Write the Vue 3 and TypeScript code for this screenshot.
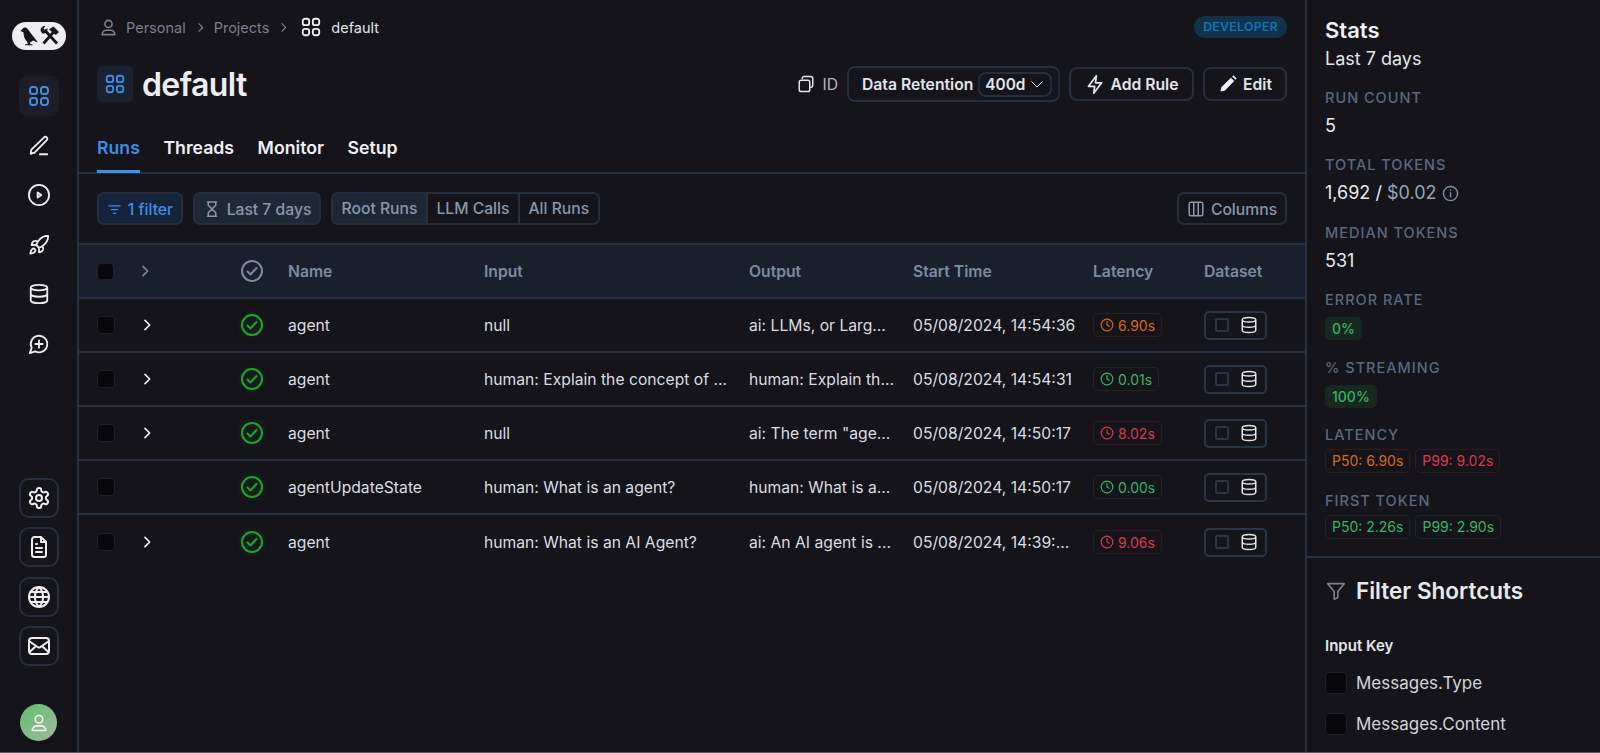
<script setup lang="ts">
type Tone = 'orange' | 'green' | 'red'

interface Run {
  name: string
  input: string
  output: string
  start: string
  latency: string
  tone: Tone
  expandable: boolean
}

const icons: Record<string, string> = {
  grid: 'M3 5.5A2.5 2.5 0 0 1 5.5 3h2A2.5 2.5 0 0 1 10 5.5v2A2.5 2.5 0 0 1 7.5 10h-2A2.5 2.5 0 0 1 3 7.5zM14 5.5A2.5 2.5 0 0 1 16.5 3h2A2.5 2.5 0 0 1 21 5.5v2a2.5 2.5 0 0 1-2.5 2.5h-2A2.5 2.5 0 0 1 14 7.5zM3 16.5A2.5 2.5 0 0 1 5.5 14h2a2.5 2.5 0 0 1 2.5 2.5v2A2.5 2.5 0 0 1 7.5 21h-2A2.5 2.5 0 0 1 3 18.5zM14 16.5a2.5 2.5 0 0 1 2.5-2.5h2a2.5 2.5 0 0 1 2.5 2.5v2a2.5 2.5 0 0 1-2.5 2.5h-2a2.5 2.5 0 0 1-2.5-2.5z',
  pen: 'M21 21h-8M3 20.5l.4-3.3c.05-.4.07-.6.13-.79a2 2 0 0 1 .23-.5c.1-.16.25-.3.54-.6L17.5 2.5a2.12 2.12 0 0 1 3 3L7.7 18.7c-.3.3-.44.44-.6.54a2 2 0 0 1-.5.23c-.19.06-.39.08-.79.13z',
  play: 'M23 12a11 11 0 1 1-22 0 11 11 0 0 1 22 0zM10.5 9.2v5.600l4-2.800z',
  rocket: 'M4.5 16.5c-1.5 1.26-2 5-2 5s3.74-.5 5-2c.71-.84.7-2.13-.09-2.91a2.18 2.18 0 0 0-2.91-.09zM12 15l-3-3a22 22 0 0 1 2-3.95A12.88 12.88 0 0 1 22 2c0 2.72-.78 7.5-6 11a22.35 22.35 0 0 1-4 2zM9 12H4s.55-3.03 2-4c1.62-1.08 5 0 5 0M12 15v5s3.03-.55 4-2c1.08-1.62 0-5 0-5',
  database: 'M21 5c0 1.66-4 3-9 3S3 6.66 3 5s4-3 9-3 9 1.34 9 3zM21 12c0 1.66-4 3-9 3s-9-1.34-9-3M3 5v14c0 1.66 4 3 9 3s9-1.34 9-3V5',
  chat: 'M7.9 20A9 9 0 1 0 4 16.1L2 22zM8 12h8M12 8v8',
  settings: 'M12.22 2h-.44a2 2 0 0 0-2 2v.18a2 2 0 0 1-1 1.73l-.43.25a2 2 0 0 1-2 0l-.15-.08a2 2 0 0 0-2.73.73l-.22.38a2 2 0 0 0 .73 2.73l.15.1a2 2 0 0 1 1 1.72v.51a2 2 0 0 1-1 1.74l-.15.09a2 2 0 0 0-.73 2.73l.22.38a2 2 0 0 0 2.73.73l.15-.08a2 2 0 0 1 2 0l.43.25a2 2 0 0 1 1 1.73V20a2 2 0 0 0 2 2h.44a2 2 0 0 0 2-2v-.18a2 2 0 0 1 1-1.73l.43-.25a2 2 0 0 1 2 0l.15.08a2 2 0 0 0 2.73-.73l.22-.39a2 2 0 0 0-.73-2.73l-.15-.08a2 2 0 0 1-1-1.74v-.5a2 2 0 0 1 1-1.74l.15-.09a2 2 0 0 0 .73-2.73l-.22-.38a2 2 0 0 0-2.73-.73l-.15.08a2 2 0 0 1-2 0l-.43-.25a2 2 0 0 1-1-1.73V4a2 2 0 0 0-2-2zM15 12a3 3 0 1 1-6 0 3 3 0 0 1 6 0z',
  file: 'M14 2H7.5A2.5 2.5 0 0 0 5 4.5v15A2.5 2.5 0 0 0 7.5 22h9a2.5 2.5 0 0 0 2.5-2.5V7zM14 2v5h5M9 13h6M9 17h6M9 9h1',
  globe: 'M22 12a10 10 0 1 1-20 0 10 10 0 0 1 20 0zM2 12h20M12 2c-5.4 5.6-5.4 14.4 0 20M12 2c5.4 5.6 5.4 14.4 0 20M3.5 7h17M3.5 17h17',
  mail: 'M5 4h14a3 3 0 0 1 3 3v10a3 3 0 0 1-3 3H5a3 3 0 0 1-3-3V7a3 3 0 0 1 3-3zM21.5 18 14.9 12M9.1 12 2.5 18M2 7l8.2 5.7c.66.46 1 .7 1.35.78a2 2 0 0 0 .97 0c.36-.09.69-.32 1.35-.78L22 7',
  user: 'M12 12a4.5 4.5 0 1 0 0-9 4.5 4.5 0 0 0 0 9zM4 21c0-3.4 2.6-5.5 5.5-5.5h5c2.9 0 5.5 2.100 5.500 5.500z',
  chevron: 'M9 5l7 7-7 7',
  check: 'M22 12a10 10 0 1 1-20 0 10 10 0 0 1 20 0zM7.500 12.500l3 3 6-6.500',
  clock: 'M22 12a10 10 0 1 1-20 0 10 10 0 0 1 20 0zM12 6v6l4 2',
}

const navItems = ['pen', 'play', 'rocket', 'database', 'chat']
const footItems = ['settings', 'file', 'globe', 'mail']
const tabs = ['Runs', 'Threads', 'Monitor', 'Setup']
const segments = ['Root Runs', 'LLM Calls', 'All Runs']
const columns = ['Name', 'Input', 'Output', 'Start Time', 'Latency', 'Dataset']

const runs: Run[] = [
  { name: 'agent', input: 'null', output: 'ai: LLMs, or Larg...', start: '05/08/2024, 14:54:36', latency: '6.90s', tone: 'orange', expandable: true },
  { name: 'agent', input: 'human: Explain the concept of ...', output: 'human: Explain th...', start: '05/08/2024, 14:54:31', latency: '0.01s', tone: 'green', expandable: true },
  { name: 'agent', input: 'null', output: 'ai: The term "age...', start: '05/08/2024, 14:50:17', latency: '8.02s', tone: 'red', expandable: true },
  { name: 'agentUpdateState', input: 'human: What is an agent?', output: 'human: What is a...', start: '05/08/2024, 14:50:17', latency: '0.00s', tone: 'green', expandable: false },
  { name: 'agent', input: 'human: What is an AI Agent?', output: 'ai: An AI agent is ...', start: '05/08/2024, 14:39:...', latency: '9.06s', tone: 'red', expandable: true },
]
</script>

<template>
  <div class="app">
    <aside class="sidebar">
      <svg class="logo" viewBox="0 0 54 28" width="54" height="28">
        <rect width="54" height="28" rx="14" fill="#eeeef1" />
        <path d="M8.500 9 11 6.200q2.500-1.400 4.500.6l3.500 4.700 7 9-5-2q-1.500 1.500-3 1.500l.5 2.300h2v1H13v-1h2.800l-.5-2.300q-3.800-4-3.800-9.500-1-1-3-1.500z" fill="#15151a" />
        <path d="M31.500 21.500 42 9.500M32.500 8 45 21.500" stroke="#15151a" stroke-width="2.800" fill="none" />
        <path d="M37 7.500 41.500 4.500l5.500 5.500-3.200 3zM28.500 9a4.500 4.500 0 0 1 5-5l-2 2.500 1.500 1.500 2.500-1.800A4.500 4.500 0 0 1 30.500 11.500z" fill="#15151a" />
      </svg>

      <a class="nav-active">
        <svg class="icon" viewBox="0 0 24 24" width="24" height="24"><path :d="icons.grid" /></svg>
      </a>
      <nav class="nav">
        <a v-for="item in navItems" :key="item" class="nav-item">
          <svg class="icon" viewBox="0 0 24 24" width="22" height="22"><path :d="icons[item]" /></svg>
        </a>
      </nav>

      <div class="foot">
        <a v-for="item in footItems" :key="item" class="foot-item">
          <svg class="icon" viewBox="0 0 24 24" width="24" height="24"><path :d="icons[item]" /></svg>
        </a>
        <div class="avatar">
          <svg class="icon" viewBox="0 0 24 24" width="20" height="20"><path :d="icons.user" /></svg>
        </div>
      </div>
    </aside>

    <main class="main">
      <div class="breadcrumb">
        <svg class="icon crumb-user" viewBox="0 0 24 24" width="19" height="19"><path :d="icons.user" /></svg>
        <span class="crumb">Personal</span>
        <svg class="icon crumb-sep" viewBox="0 0 24 24" width="13" height="13"><path :d="icons.chevron" /></svg>
        <span class="crumb">Projects</span>
        <svg class="icon crumb-sep" viewBox="0 0 24 24" width="13" height="13"><path :d="icons.chevron" /></svg>
        <svg class="icon crumb-grid" viewBox="0 0 24 24" width="22" height="22"><path :d="icons.grid" /></svg>
        <span class="crumb-current">default</span>
        <span class="badge">DEVELOPER</span>
      </div>

      <div class="title-row">
        <div class="title-icon">
          <svg class="icon" viewBox="0 0 24 24" width="22" height="22"><path :d="icons.grid" /></svg>
        </div>
        <h1 class="title">default</h1>
        <div class="actions">
          <svg class="icon copy-icon" viewBox="0 0 24 24" width="18" height="18">
            <path d="M7 4.500A2.500 2.500 0 0 1 9.500 2H18a3 3 0 0 1 3 3v9a2.500 2.500 0 0 1-2 2.400M5.500 7h9A2.500 2.500 0 0 1 17 9.500v10a2.500 2.500 0 0 1-2.500 2.500h-9A2.500 2.500 0 0 1 3 19.500v-10A2.500 2.500 0 0 1 5.500 7z" />
          </svg>
          <span class="id-label">ID</span>
          <div class="retention">
            <span>Data Retention</span>
            <span class="retention-select">
              400d
              <svg class="icon thin" viewBox="0 0 24 24" width="16" height="16"><path d="M4 8.500l8 8 8-8" /></svg>
            </span>
          </div>
          <button class="action-btn add-rule">
            <svg class="icon" viewBox="0 0 24 24" width="21" height="21"><path d="M13 2 4 14h7l-1 8 9-12h-7z" /></svg>
            Add Rule
          </button>
          <button class="action-btn edit">
            <svg viewBox="0 0 24 24" width="20" height="20"><path d="M3 21l1-5L15.500 4.500l4 4L8 20zM17 3l1.500-1.500 4 4L21 7z" fill="#f0f0f3" /></svg>
            Edit
          </button>
        </div>
      </div>

      <div class="tabs">
        <a v-for="(tab, i) in tabs" :key="tab" class="tab" :class="{ 'tab-active': i === 0 }">{{ tab }}</a>
      </div>

      <div class="toolbar">
        <button class="tool-btn filter-btn">
          <svg class="icon" viewBox="0 0 24 24" width="15" height="15"><path d="M3 6h18M7 12h10M10 18h4" /></svg>
          1 filter
        </button>
        <button class="tool-btn days-btn">
          <svg class="icon" viewBox="0 0 24 24" width="18" height="18"><path d="M6 2.500h12M6 21.500h12M7 2.500v4.500l5 5 5-5V2.500M7 21.500V17l5-5 5 5v4.500" /></svg>
          Last 7 days
        </button>
        <div class="segments">
          <span v-for="(seg, i) in segments" :key="seg" class="segment" :class="{ 'segment-active': i === 0 }">{{ seg }}</span>
        </div>
        <button class="tool-btn columns-btn">
          <svg class="icon" viewBox="0 0 24 24" width="18" height="18"><path d="M5 3h14a2 2 0 0 1 2 2v14a2 2 0 0 1-2 2H5a2 2 0 0 1-2-2V5a2 2 0 0 1 2-2zM9 3v18M15 3v18" /></svg>
          Columns
        </button>
      </div>

      <div class="table">
        <div class="row head-row">
          <span class="checkbox head-checkbox"></span>
          <span class="chevron-cell">
            <svg class="icon" viewBox="0 0 24 24" width="16" height="16"><path :d="icons.chevron" /></svg>
          </span>
          <span class="status-cell">
            <svg class="icon" viewBox="0 0 24 24" width="24" height="24"><path :d="icons.check" /></svg>
          </span>
          <span v-for="col in columns" :key="col">{{ col }}</span>
        </div>

        <div v-for="(run, i) in runs" :key="i" class="row body-row">
          <span class="checkbox"></span>
          <span class="chevron-cell">
            <svg v-if="run.expandable" class="icon row-chevron" viewBox="0 0 24 24" width="16" height="16"><path :d="icons.chevron" /></svg>
          </span>
          <span class="status-cell status-ok">
            <svg class="icon" viewBox="0 0 24 24" width="24" height="24"><path :d="icons.check" /></svg>
          </span>
          <span class="cell">{{ run.name }}</span>
          <span class="cell">{{ run.input }}</span>
          <span class="cell">{{ run.output }}</span>
          <span class="cell">{{ run.start }}</span>
          <span class="cell">
            <span class="latency" :class="run.tone">
              <svg class="icon" viewBox="0 0 24 24" width="14" height="14"><path :d="icons.clock" /></svg>
              {{ run.latency }}
            </span>
          </span>
          <span class="cell">
            <span class="dataset">
              <span class="dataset-check"></span>
              <svg class="icon" viewBox="0 0 24 24" width="18" height="18"><path :d="icons.database" /></svg>
            </span>
          </span>
        </div>
      </div>
    </main>

    <aside class="stats">
      <div class="stats-top">
        <h2 class="stats-title">Stats</h2>
        <p class="stats-range">Last 7 days</p>

        <p class="stat-label">RUN COUNT</p>
        <p class="stat-value">5</p>

        <p class="stat-label">TOTAL TOKENS</p>
        <p class="stat-value">
          <span>1,692 / <span class="cost">$0.02</span></span>
          <svg class="icon info" viewBox="0 0 24 24" width="17" height="17"><path d="M22 12a10 10 0 1 1-20 0 10 10 0 0 1 20 0zM12 11v6M12 7v.5" /></svg>
        </p>

        <p class="stat-label">MEDIAN TOKENS</p>
        <p class="stat-value">531</p>

        <p class="stat-label">ERROR RATE</p>
        <span class="pill">0%</span>

        <p class="stat-label">% STREAMING</p>
        <span class="pill">100%</span>

        <p class="stat-label">LATENCY</p>
        <div class="chips">
          <span class="chip orange">P50: 6.90s</span>
          <span class="chip red">P99: 9.02s</span>
        </div>

        <p class="stat-label">FIRST TOKEN</p>
        <div class="chips">
          <span class="chip green">P50: 2.26s</span>
          <span class="chip green">P99: 2.90s</span>
        </div>
      </div>

      <div class="shortcuts">
        <h3 class="shortcuts-title">
          <svg class="icon" viewBox="0 0 24 24" width="22" height="22"><path d="M3 4h18l-7 8.500V19l-4 2v-8.500z" /></svg>
          Filter Shortcuts
        </h3>
        <p class="shortcut-group">Input Key</p>
        <label class="shortcut"><span class="shortcut-box"></span>Messages.Type</label>
        <label class="shortcut"><span class="shortcut-box"></span>Messages.Content</label>
      </div>
    </aside>
  </div>
</template>

<style scoped>
.app {
  display: flex;
  box-sizing: border-box;
  height: 753px;
  overflow: hidden;
  border-bottom: 1px solid #5a5b60;
  background: #14141a;
  color: #e4e5ea;
  font-family: Inter, "Liberation Sans", sans-serif;
}

p,
h1,
h2,
h3 {
  margin: 0;
}

.icon {
  display: block;
  flex-shrink: 0;
  fill: none;
  stroke: currentColor;
  stroke-width: 2;
  stroke-linecap: round;
  stroke-linejoin: round;
}

.thin {
  stroke-width: 1.5;
}

/* left rail */
.sidebar {
  display: flex;
  flex-direction: column;
  align-items: center;
  flex: 0 0 79px;
  box-sizing: border-box;
  padding-top: 22px;
  border-right: 2px solid #273142;
  color: #eeeef1;
}

.logo {
  display: block;
}

.nav-active {
  display: grid;
  place-items: center;
  width: 40px;
  height: 40px;
  margin-top: 26px;
  border-radius: 8px;
  background: #1d1e25;
  color: #3f8fe6;
}

.nav {
  display: flex;
  flex-direction: column;
  margin-top: 5px;
}

.nav-item {
  display: grid;
  place-items: center;
  width: 40px;
  height: 49.5px;
}

.foot {
  display: flex;
  flex-direction: column;
  align-items: center;
  gap: 9.5px;
  margin-top: auto;
  padding-bottom: 11px;
}

.foot-item {
  display: grid;
  place-items: center;
  box-sizing: border-box;
  width: 40px;
  height: 40px;
  border: 2px solid #242e3e;
  border-radius: 10px;
}

.avatar {
  display: grid;
  place-items: center;
  width: 37px;
  height: 37px;
  margin-top: 28.5px;
  border-radius: 50%;
  background: linear-gradient(135deg, #5fbf6f, #a3b8a0);
  color: #f4f7f2;
}

/* main column */
.main {
  flex: 1;
  min-width: 0;
}

.breadcrumb {
  display: flex;
  align-items: center;
  height: 54px;
  padding: 0 18px;
  font-size: 14.5px;
}

.crumb-user {
  margin-left: 2px;
  color: #7c7f8c;
}

.crumb {
  margin-left: 8px;
  color: #7c7f8c;
}

.crumb-sep {
  margin: 0 7px 0 8px;
  color: #7c7f8c;
}

.crumb + .crumb-sep + .crumb {
  margin-left: 0;
}

.crumb-grid {
  margin-left: 3px;
  color: #f0f0f3;
}

.crumb-current {
  margin-left: 9px;
  color: #e4e5ea;
}

.badge {
  margin-left: auto;
  padding: 0 9px;
  border-radius: 11px;
  background: #123249;
  color: #0f76b8;
  font-size: 12.3px;
  font-weight: 600;
  line-height: 22px;
  letter-spacing: 0.3px;
}

.title-row {
  display: flex;
  align-items: center;
  height: 38px;
  margin-top: 11px;
  padding: 0 18px;
}

.title-icon {
  display: grid;
  place-items: center;
  width: 36px;
  height: 36px;
  border-radius: 5px;
  background: #1a2130;
  color: #3f8fe6;
}

.title {
  margin-left: 9px;
  color: #eeeef1;
  font-size: 32px;
  font-weight: 600;
  letter-spacing: -0.6px;
}

.actions {
  display: flex;
  align-items: center;
  margin-left: auto;
}

.copy-icon {
  color: #e4e5ea;
}

.id-label {
  margin: 0 9px 0 7px;
  color: #b6b8c1;
  font-size: 15.7px;
}

.retention {
  display: flex;
  align-items: center;
  gap: 5px;
  box-sizing: border-box;
  width: 213px;
  height: 36px;
  padding-left: 13px;
  border: 2px solid #242e3e;
  border-radius: 8px;
  font-size: 15.7px;
  font-weight: 600;
  white-space: nowrap;
}

.retention-select {
  display: flex;
  align-items: center;
  justify-content: space-between;
  box-sizing: border-box;
  width: 74px;
  height: 25px;
  padding: 0 5px;
  border: 2px solid #242e3e;
  border-radius: 8px;
  font-size: 15.4px;
}

.action-btn {
  display: flex;
  align-items: center;
  justify-content: center;
  gap: 5px;
  box-sizing: border-box;
  height: 34px;
  margin-left: 9px;
  border: 2px solid #242e3e;
  border-radius: 8px;
  background: none;
  color: #e4e5ea;
  font: 600 15.7px Inter, sans-serif;
}

.add-rule {
  width: 125px;
}

.edit {
  width: 84px;
}

.tabs {
  display: flex;
  gap: 23.5px;
  box-sizing: border-box;
  height: 52px;
  margin-top: 19px;
  padding: 0 18px;
  border-bottom: 2px solid #273142;
}

.tab {
  box-sizing: border-box;
  height: 51px;
  padding-top: 15px;
  color: #f0f0f3;
  font-size: 17.7px;
  font-weight: 600;
  line-height: 22px;
}

.tab-active {
  border-bottom: 3px solid #3f8fe6;
  color: #3f8fe6;
}

.toolbar {
  display: flex;
  align-items: center;
  gap: 10px;
  padding: 18px 18px 18px;
}

.tool-btn {
  display: flex;
  align-items: center;
  justify-content: center;
  gap: 6px;
  box-sizing: border-box;
  height: 33px;
  padding: 1px 0 0;
  border: 2px solid #242e3e;
  border-radius: 7px;
  background: #1e2938;
  color: #8a97ad;
  font: 500 15.7px Inter, sans-serif;
}

.filter-btn {
  width: 86px;
  background: #14233a;
  color: #3f8fe6;
}

.days-btn {
  width: 128px;
}

.columns-btn {
  width: 110px;
  margin-left: auto;
  background: none;
}

.segments {
  display: flex;
  box-sizing: border-box;
  height: 33px;
  border: 2px solid #242e3e;
  border-radius: 7px;
  overflow: hidden;
  color: #8a97ad;
  font-size: 15.7px;
  font-weight: 500;
}

.segment {
  padding: 0 8.5px;
  line-height: 30px;
  border-left: 2px solid #242e3e;
  white-space: nowrap;
}

.segment:first-child {
  border-left: 0;
}

.segment-active {
  background: #1e2633;
}

/* runs table */
.table {
  border-top: 2px solid #273142;
}

.row {
  display: grid;
  grid-template-columns: 40px 103px 48px 196px 265px 164px 180px 111px 1fr;
  align-items: center;
  box-sizing: border-box;
  height: 54px;
  padding-left: 18px;
  border-bottom: 2px solid #273142;
}

.head-row {
  background: #1a1f2d;
  color: #7d8ba3;
  font-size: 15.7px;
  font-weight: 600;
}

.body-row {
  font-size: 15.7px;
  color: #dcdde2;
}

.body-row:last-child {
  border-bottom: 0;
}

.checkbox {
  box-sizing: border-box;
  width: 18px;
  height: 18px;
  border: 1px solid #1f2028;
  border-radius: 4px;
  background: #08080c;
}

.head-checkbox {
  width: 17px;
  height: 17px;
}

.chevron-cell {
  color: #7d8ba3;
}

.chevron-cell .icon {
  stroke-width: 2.5;
}

.row-chevron {
  margin-left: 2px;
  color: #f0f0f3;
}

.status-cell {
  color: #7d8ba3;
}

.status-ok {
  color: #1fa52c;
}

.status-ok .icon {
  filter: drop-shadow(0 0 3px #1d3322);
}

.cell {
  white-space: nowrap;
  min-width: 0;
}

.latency {
  display: inline-flex;
  align-items: center;
  gap: 4px;
  box-sizing: border-box;
  height: 24px;
  padding: 0 6px;
  border-width: 1px;
  border-style: solid;
  border-radius: 5px;
  font-size: 14px;
  vertical-align: middle;
}

.dataset {
  display: inline-flex;
  align-items: center;
  justify-content: space-between;
  box-sizing: border-box;
  width: 63px;
  height: 29px;
  padding: 0 7px 0 9px;
  border: 2px solid #2a3547;
  border-radius: 5px;
  vertical-align: middle;
  color: #e4e5ea;
}

.dataset-check {
  box-sizing: border-box;
  width: 14px;
  height: 14px;
  border: 2px solid #2a3547;
  border-radius: 2px;
}

/* right panel */
.stats {
  flex: 0 0 295px;
  box-sizing: border-box;
  border-left: 2px solid #273142;
  overflow: hidden;
}

.stats-top {
  height: 558px;
  box-sizing: border-box;
  padding: 17px 18px 0;
  border-bottom: 2px solid #273142;
}

.stats-title {
  color: #f0f0f3;
  font-size: 22px;
  font-weight: 600;
  line-height: 26px;
}

.stats-range {
  margin-top: 3px;
  color: #e4e5ea;
  font-size: 18px;
  line-height: 26px;
}

.stat-label {
  margin-top: 18.5px;
  color: #5a6880;
  font-size: 14.5px;
  font-weight: 500;
  line-height: 18px;
  letter-spacing: 1px;
}

.stats-range + .stat-label {
  margin-top: 16.5px;
}

.stat-value {
  display: flex;
  align-items: center;
  gap: 6px;
  margin-top: 7px;
  color: #e8e9ed;
  font-size: 18px;
  line-height: 24px;
}

.cost {
  color: #9aa5b5;
}

.info {
  color: #7d8ba3;
}

.pill {
  display: block;
  width: fit-content;
  margin-top: 8px;
  padding: 0 7px;
  border-radius: 5px;
  background: #182720;
  color: #35b765;
  font-size: 14px;
  font-weight: 500;
  line-height: 23px;
}

.chips {
  display: flex;
  gap: 5px;
  margin-top: 5px;
}

.chip {
  box-sizing: border-box;
  height: 24px;
  padding: 0 6px;
  border-width: 1px;
  border-style: solid;
  border-radius: 5px;
  font-size: 14px;
  line-height: 22px;
  white-space: nowrap;
}

.orange {
  border-color: #2e2018;
  color: #d9691a;
}

.green {
  border-color: #1a2a21;
  color: #35b765;
}

.red {
  border-color: #301c20;
  color: #dc3a50;
}

.shortcuts {
  padding: 20px 18px 0;
}

.shortcuts-title {
  display: flex;
  align-items: center;
  gap: 9px;
  color: #e8e9ed;
  font-size: 22.5px;
  font-weight: 600;
  line-height: 26px;
}

.shortcuts-title .icon {
  color: #7c7f8c;
  stroke-width: 1.8;
}

.shortcut-group {
  margin-top: 30px;
  color: #e4e5ea;
  font-size: 15px;
  font-weight: 600;
  line-height: 24px;
}

.shortcut {
  display: flex;
  align-items: center;
  gap: 9px;
  height: 22px;
  margin-top: 19px;
  color: #d4d5da;
  font-size: 17px;
}

.shortcut-group + .shortcut {
  margin-top: 14px;
}

.shortcut-box {
  box-sizing: border-box;
  width: 22px;
  height: 22px;
  border: 1px solid #1f2028;
  border-radius: 4px;
  background: #08080c;
}
</style>
